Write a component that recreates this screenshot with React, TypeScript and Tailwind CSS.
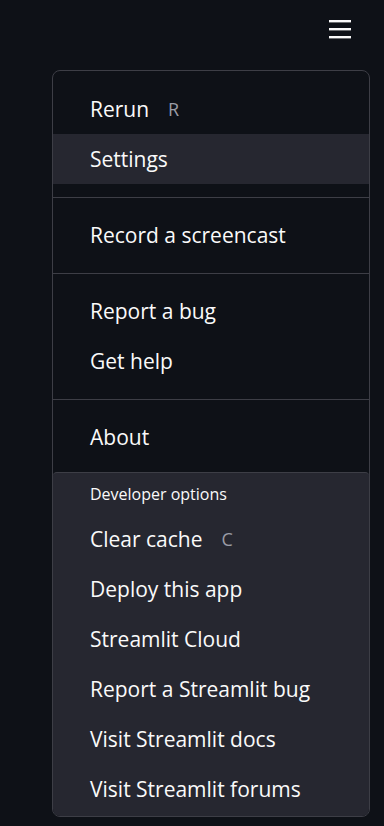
import React from "react";

const Row = ({ label, kbd, active }: { label: string; kbd?: string; active?: boolean }) => (
  <div className={`h-[50px] flex items-center pl-[37px] ${active ? "bg-[#262730]" : ""}`}>
    <span className="text-[21px] font-medium text-[#fafafa] leading-none">{label}</span>
    {kbd && <span className="ml-[19px] text-[18px] text-[#9a9ca6] leading-none">{kbd}</span>}
  </div>
);

const Divider = () => <div className="mt-[13px] mb-[12px] h-px bg-[#3d3e46]" />;

export default function App() {
  return (
    <div
      className="w-[384px] h-[826px] bg-[#0e1117] relative overflow-hidden"
      style={{ fontFamily: "'Open Sans', 'Noto Sans', sans-serif" }}
    >
      <div className="flex justify-end pt-[19px] pr-[32px] h-[70px]">
        <svg width="24" height="20" viewBox="0 0 24 20">
          <rect x="1" y="1" width="22" height="2.4" fill="#fafafa" />
          <rect x="1" y="9" width="22" height="2.4" fill="#fafafa" />
          <rect x="1" y="17" width="22" height="2.4" fill="#fafafa" />
        </svg>
      </div>
      <div className="ml-[52px] w-[318px] border border-[#3d3e46] rounded-[8px] overflow-hidden bg-[#0e1117]">
        <div className="pt-[13px] pb-[10px]">
          <Row label="Rerun" kbd="R" />
          <Row label="Settings" active />
          <Divider />
          <Row label="Record a screencast" />
          <Divider />
          <Row label="Report a bug" />
          <Row label="Get help" />
          <Divider />
          <Row label="About" />
        </div>
        <div className="bg-[#262730] border-t border-[#3d3e46] rounded-t-[4px] pb-[2px]">
          <div className="h-[41px] flex items-center pl-[37px]">
            <span className="text-[16px] font-medium text-[#fafafa] leading-none">Developer options</span>
          </div>
          <Row label="Clear cache" kbd="C" />
          <Row label="Deploy this app" />
          <Row label="Streamlit Cloud" />
          <Row label="Report a Streamlit bug" />
          <Row label="Visit Streamlit docs" />
          <Row label="Visit Streamlit forums" />
        </div>
      </div>
    </div>
  );
}
